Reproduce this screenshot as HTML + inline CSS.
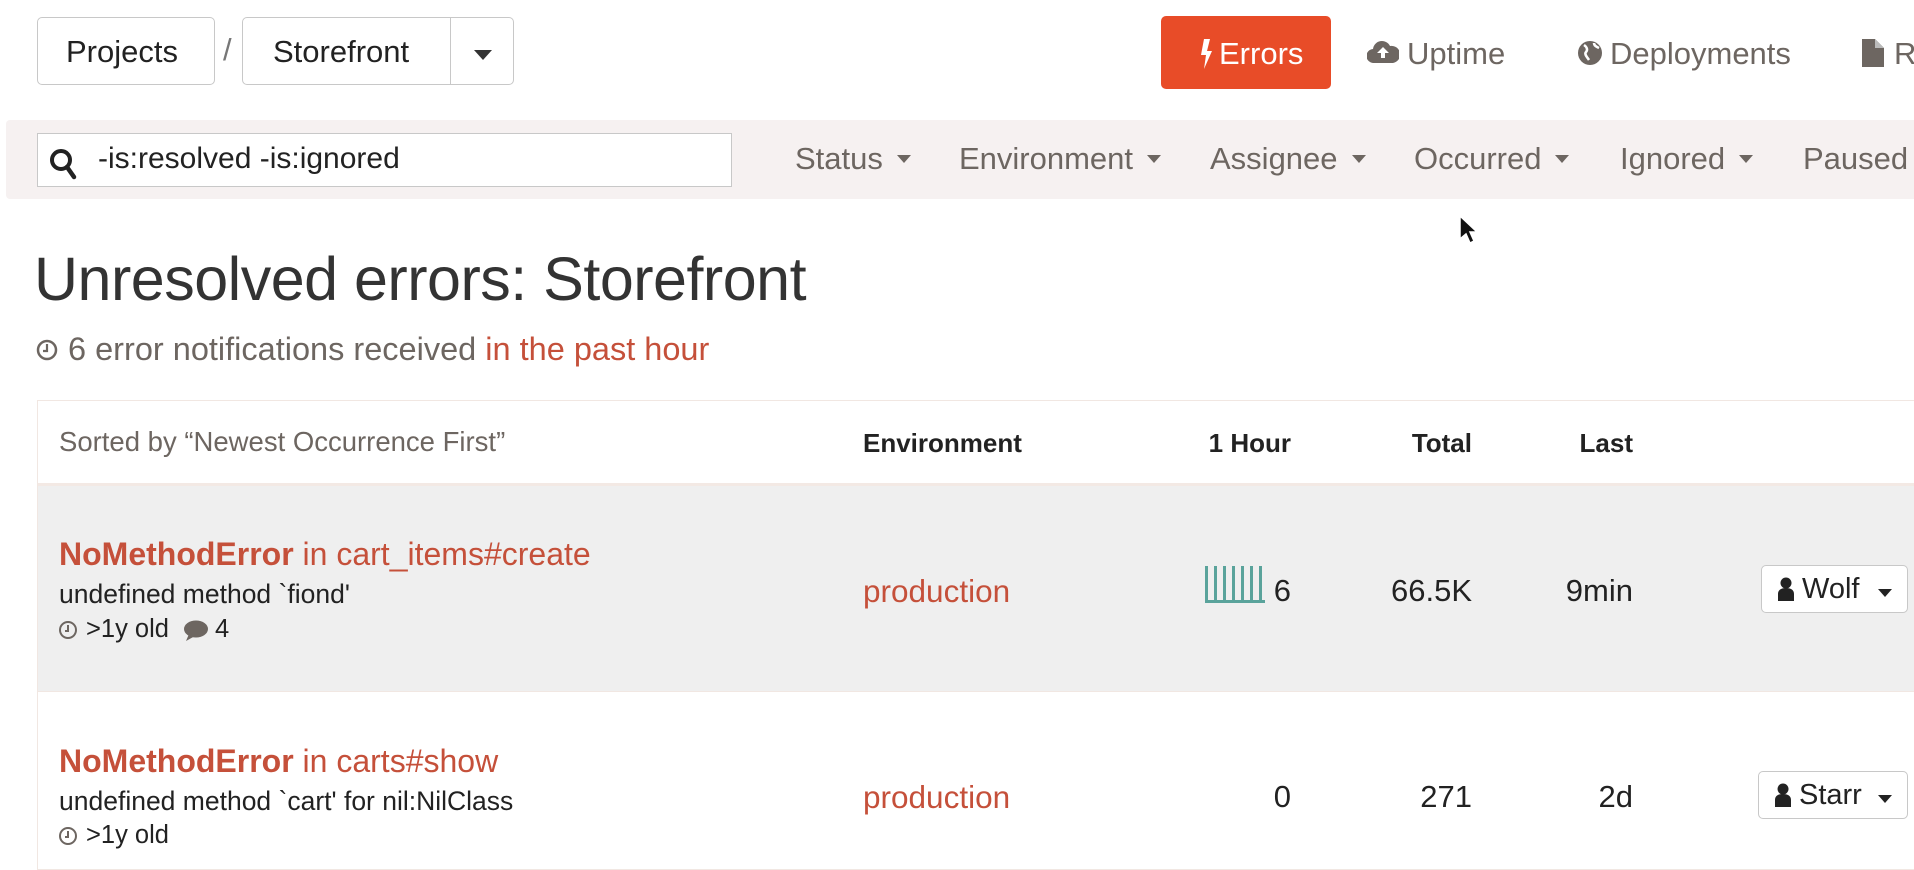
<!DOCTYPE html>
<html><head><meta charset="utf-8"><style>
*{box-sizing:border-box;margin:0;padding:0}
body{width:1914px;height:868px;overflow:hidden;background:#fff;font-family:"Liberation Sans",Helvetica,Arial,sans-serif;position:relative;color:#333}
.a{position:absolute;white-space:nowrap}
.btn{position:absolute;border:1px solid #c8c8c8;border-radius:5px;background:#fff}
.nav{color:#6d6661;font-size:31px}
.flt{color:#6d6661;font-size:31px;top:141px}
.car{display:inline-block;width:0;height:0;border-left:7px solid transparent;border-right:7px solid transparent;border-top:8px solid #6d6661;vertical-align:middle;margin-left:14px;margin-top:-3px}
.red{color:#c5503a}
.th{font-weight:bold;font-size:26px;color:#222;top:428px}
.num{font-size:31px;color:#222;text-align:right}
</style></head><body>
<div class="btn" style="left:37px;top:17px;width:178px;height:68px"></div>
<div class="a" style="left:66px;top:34px;font-size:31px;color:#222">Projects</div>
<div class="a" style="left:223px;top:32px;font-size:31px;color:#777">/</div>
<div class="btn" style="left:242px;top:17px;width:272px;height:68px"></div>
<div class="a" style="left:450px;top:17px;width:1px;height:68px;background:#c8c8c8"></div>
<div class="a" style="left:273px;top:34px;font-size:31px;color:#222">Storefront</div>
<div class="a" style="left:474px;top:50px;border-left:9px solid transparent;border-right:9px solid transparent;border-top:10px solid #333"></div>

<div class="a" style="left:1161px;top:16px;width:170px;height:73px;background:#e84c28;border-radius:5px"></div>
<svg class="a" style="left:1199px;top:39px" width="14" height="30" viewBox="0 0 14 30"><path d="M5 0h6L8 12h5L5 30l2-14H2z" fill="#fff"/></svg>
<div class="a" style="left:1219px;top:36px;font-size:31px;color:#fff">Errors</div>
<svg class="a" style="left:1367px;top:39px" width="32" height="24" viewBox="0 0 32 24"><path d="M7 24a7 7 0 0 1-1-14 9 9 0 0 1 17-3 7 7 0 0 1 3 17z" fill="#6d6661"/><path d="M16 8l-6 6h4v5h4v-5h4z" fill="#fff"/></svg>
<div class="a nav" style="left:1407px;top:36px">Uptime</div>
<svg class="a" style="left:1577px;top:40px" width="26" height="26" viewBox="0 0 26 26"><circle cx="13" cy="13" r="12" fill="#6d6661"/><path d="M7 5c3 2 4 5 2 7s1 5 3 8M17 3c0 3 3 4 5 5" stroke="#fff" stroke-width="2.5" fill="none"/></svg>
<div class="a nav" style="left:1610px;top:36px">Deployments</div>
<svg class="a" style="left:1862px;top:39px" width="22" height="28" viewBox="0 0 22 28"><path d="M0 0h13l9 9v19H0z" fill="#6d6661"/><path d="M13 0v9h9" fill="#bbb"/></svg>
<div class="a nav" style="left:1894px;top:36px">R</div>

<div class="a" style="left:6px;top:120px;width:1908px;height:79px;background:#f6f1f1;border-radius:4px 0 0 4px"></div>
<div class="a" style="left:37px;top:133px;width:695px;height:54px;background:#fff;border:1px solid #c8c8c8"></div>
<svg class="a" style="left:49px;top:148px" width="28" height="32" viewBox="0 0 28 32"><circle cx="12" cy="12" r="9" stroke="#222" stroke-width="4" fill="none"/><path d="M18 19l7 10" stroke="#222" stroke-width="4.5" stroke-linecap="round"/></svg>
<div class="a" style="left:98px;top:142px;font-size:30px;color:#222">-is:resolved -is:ignored</div>
<div class="a flt" style="left:795px">Status<span class="car"></span></div>
<div class="a flt" style="left:959px">Environment<span class="car"></span></div>
<div class="a flt" style="left:1210px">Assignee<span class="car"></span></div>
<div class="a flt" style="left:1414px">Occurred<span class="car"></span></div>
<div class="a flt" style="left:1620px">Ignored<span class="car"></span></div>
<div class="a flt" style="left:1803px">Paused</div>

<svg class="a" style="left:1458px;top:215px" width="20" height="32" viewBox="0 0 20 32"><path d="M2 1v23l6-5 4 9 4-2-4-9h7z" fill="#111" stroke="#fff" stroke-width="1.5"/></svg>

<div class="a" style="left:34px;top:244px;font-size:61px;color:#333;letter-spacing:-0.5px">Unresolved errors: Storefront</div>
<svg class="a" style="left:36px;top:339px" width="22" height="22" viewBox="0 0 22 22"><circle cx="11" cy="11" r="9" stroke="#6d6661" stroke-width="2.5" fill="none"/><path d="M11 5v7H7" stroke="#6d6661" stroke-width="2.2" fill="none"/></svg>
<div class="a" style="left:68px;top:331px;font-size:32.5px;color:#6d6661">6 error notifications received <span class="red">in the past hour</span></div>

<div class="a" style="left:37px;top:400px;width:1900px;height:470px;border:1px solid #f1e7e2;border-right:none"></div>
<div class="a" style="left:38px;top:483px;width:1876px;height:3px;background:#f3e9e4"></div>
<div class="a" style="left:59px;top:426px;font-size:27.5px;color:#6d6661">Sorted by “Newest Occurrence First”</div>
<div class="a th" style="left:863px">Environment</div>
<div class="a th" style="left:1171px;width:120px;text-align:right">1 Hour</div>
<div class="a th" style="left:1352px;width:120px;text-align:right">Total</div>
<div class="a th" style="left:1513px;width:120px;text-align:right">Last</div>

<div class="a" style="left:38px;top:486px;width:1876px;height:206px;background:#efefef;border-bottom:1px solid #f1e7e2"></div>
<div class="a" style="left:59px;top:536px;font-size:32px" ><span class="red" style="font-weight:bold">NoMethodError</span> <span class="red">in cart_items#create</span></div>
<div class="a" style="left:59px;top:579px;font-size:26.5px;color:#222">undefined method `fiond'</div>
<svg class="a" style="left:58px;top:620px" width="20" height="20" viewBox="0 0 20 20"><circle cx="10" cy="10" r="8" stroke="#6d6661" stroke-width="2" fill="none"/><path d="M10 5v6H7" stroke="#6d6661" stroke-width="2" fill="none"/></svg>
<div class="a" style="left:86px;top:615px;font-size:25.5px;color:#222">&gt;1y old</div>
<svg class="a" style="left:183px;top:620px" width="26" height="22" viewBox="0 0 26 22"><ellipse cx="13" cy="9" rx="12" ry="8.5" fill="#6d6661"/><path d="M6 14l-3 7 9-5z" fill="#6d6661"/></svg>
<div class="a" style="left:215px;top:615px;font-size:25.5px;color:#222">4</div>
<div class="a red" style="left:863px;top:573px;font-size:31.5px">production</div>
<svg class="a" style="left:1205px;top:566px" width="60" height="37" viewBox="0 0 60 37"><g fill="#5aa39b"><rect x="0" y="0" width="3" height="36"/><rect x="9" y="0" width="3" height="36"/><rect x="18" y="0" width="3" height="36"/><rect x="27" y="0" width="3" height="36"/><rect x="36" y="0" width="3" height="36"/><rect x="45" y="0" width="3" height="36"/><rect x="54" y="0" width="3" height="36"/><rect x="0" y="34" width="60" height="3"/></g></svg>
<div class="a num" style="left:1191px;top:573px;width:100px">6</div>
<div class="a num" style="left:1352px;top:573px;width:120px">66.5K</div>
<div class="a num" style="left:1513px;top:573px;width:120px">9min</div>
<div class="btn" style="left:1761px;top:565px;width:147px;height:48px"></div>
<svg class="a" style="left:1777px;top:577px" width="18" height="24" viewBox="0 0 18 24"><circle cx="9" cy="6" r="5.5" fill="#222"/><path d="M1 24v-7c0-4 3-6 8-6s8 2 8 6v7z" fill="#222"/></svg>
<div class="a" style="left:1802px;top:573px;font-size:29px;color:#222">Wolf</div>
<div class="a" style="left:1878px;top:589px;border-left:7px solid transparent;border-right:7px solid transparent;border-top:8px solid #222"></div>

<div class="a" style="left:59px;top:743px;font-size:32px" ><span class="red" style="font-weight:bold">NoMethodError</span> <span class="red">in carts#show</span></div>
<div class="a" style="left:59px;top:786px;font-size:26.5px;color:#222">undefined method `cart' for nil:NilClass</div>
<svg class="a" style="left:58px;top:826px" width="20" height="20" viewBox="0 0 20 20"><circle cx="10" cy="10" r="8" stroke="#6d6661" stroke-width="2" fill="none"/><path d="M10 5v6H7" stroke="#6d6661" stroke-width="2" fill="none"/></svg>
<div class="a" style="left:86px;top:821px;font-size:25.5px;color:#222">&gt;1y old</div>
<div class="a red" style="left:863px;top:779px;font-size:31.5px">production</div>
<div class="a num" style="left:1191px;top:779px;width:100px">0</div>
<div class="a num" style="left:1352px;top:779px;width:120px">271</div>
<div class="a num" style="left:1513px;top:779px;width:120px">2d</div>
<div class="btn" style="left:1758px;top:771px;width:150px;height:48px"></div>
<svg class="a" style="left:1774px;top:783px" width="18" height="24" viewBox="0 0 18 24"><circle cx="9" cy="6" r="5.5" fill="#222"/><path d="M1 24v-7c0-4 3-6 8-6s8 2 8 6v7z" fill="#222"/></svg>
<div class="a" style="left:1799px;top:779px;font-size:29px;color:#222">Starr</div>
<div class="a" style="left:1878px;top:795px;border-left:7px solid transparent;border-right:7px solid transparent;border-top:8px solid #222"></div>
</body></html>
